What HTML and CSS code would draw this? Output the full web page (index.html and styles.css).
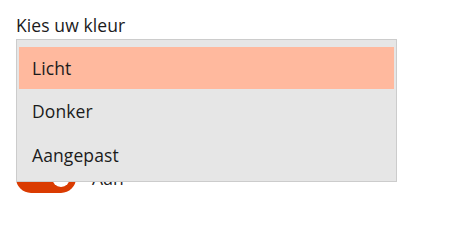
FILE: index.html
```html
<!DOCTYPE html>
<html lang="nl">
<head>
<meta charset="utf-8">
<link rel="stylesheet" href="styles.css">
</head>
<body>
<main class="page">
  <div class="label">Kies uw kleur</div>
  <div class="field">
    <div class="combo-space"></div>
    <div class="toggle-row">
      <span class="toggle"><span class="knob"></span></span>
      <span class="toggle-text">Aan</span>
    </div>
    <ul class="menu">
      <li class="item selected">Licht</li>
      <li class="item">Donker</li>
      <li class="item">Aangepast</li>
    </ul>
  </div>
</main>
</body>
</html>
```
FILE: styles.css
```css
html, body {
  margin: 0;
  padding: 0;
  background: #ffffff;
}
.page {
  padding: 13px 16px 0 16px;
  font-family: "Open Sans", "Noto Sans", sans-serif;
  color: #1b1b1b;
  font-size: 17.5px;
  letter-spacing: 0.1px;
}
.label {
  line-height: 24px;
  height: 24px;
}
.field {
  position: relative;
  margin-top: 2px;
}
.combo-space {
  height: 124px;
}
.toggle-row {
  display: flex;
  align-items: center;
  gap: 16px;
}
.toggle {
  position: relative;
  width: 60px;
  height: 30px;
  border-radius: 15px;
  background: #da3b01;
}
.knob {
  position: absolute;
  right: 6px;
  top: 6px;
  width: 18px;
  height: 18px;
  border-radius: 50%;
  background: #ffffff;
}
.toggle-text {
  line-height: 30px;
}
.menu {
  position: absolute;
  left: 0;
  top: 0;
  width: 381px;
  margin: 0;
  padding: 7px 2px 4px 2px;
  list-style: none;
  background: #e6e6e6;
  border: 1px solid #cccccc;
  box-sizing: border-box;
  height: 143px;
}
.item {
  height: 44px;
  line-height: 44px;
  padding-left: 13px;
}
.item.selected {
  background: #ffb99e;
  height: 42px;
  line-height: 42px;
}
```
